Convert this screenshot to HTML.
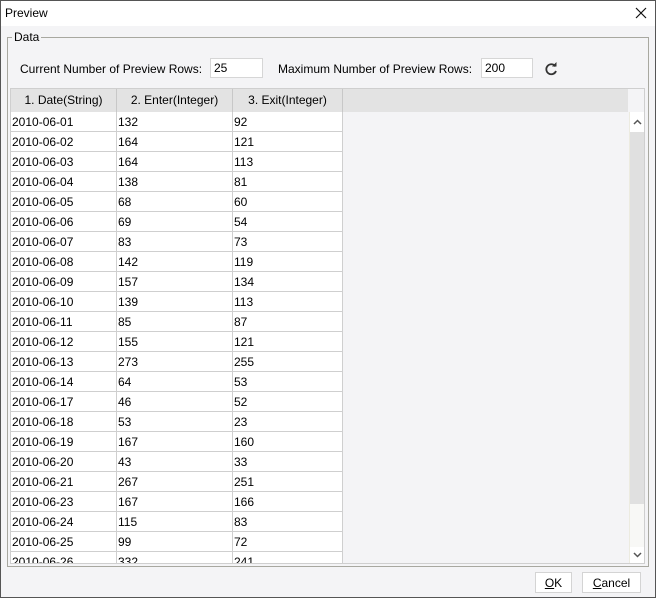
<!DOCTYPE html><html><head><style>
*{margin:0;padding:0;box-sizing:border-box}
body{width:656px;height:598px;overflow:hidden;font-family:"Liberation Sans",sans-serif;font-size:12px;color:#000;background:#f4f4f6;position:relative}
.frame{position:absolute;left:0;top:0;width:656px;height:598px;border:1px solid #555;pointer-events:none;z-index:9}
.title{position:absolute;left:0;top:0;width:656px;height:26px;background:#fff}
.title span{position:absolute;left:5px;top:6px;font-size:12px}
.x{position:absolute;left:635px;top:7px}
.grp{position:absolute;left:7px;top:37px;width:642px;height:530px;border:1px solid #a8a8a0}
.lg{position:absolute;left:12px;top:30px;background:#f4f4f6;padding:0 2px;font-size:12px}
.lbl{position:absolute;top:62px}
.inp{position:absolute;top:58px;height:20px;border:1px solid #d6d6d6;background:#fff;padding:2px 3px}
.tbl{position:absolute;left:10px;top:88px;width:635px;height:476px;border:1px solid #cfcfcf;background:#f4f4f6;overflow:hidden}
.hd{position:absolute;left:0;top:0;width:617px;height:23px;background:#e3e3e3}
.hc{position:absolute;top:0;height:23px;line-height:23px;text-align:center;border-right:1px solid #c8c8c8}
.row{position:absolute;left:0;height:20px;width:332px}
.c{position:absolute;top:0;height:20px;line-height:21px;background:#fff;border-right:1px solid #cfcfcf;border-bottom:1px solid #cfcfcf;padding-left:1px}
.sb{position:absolute;left:618px;top:23px;width:16px;height:452px;background:#f8f8f6;border-left:1px solid #ecebe0}
.btn{position:absolute;top:572px;height:21px;border:1px solid #d4d4d4;background:#fff;text-align:center;line-height:21px}
</style></head><body>
<div class="title"><span>Preview</span>
<svg class="x" width="12" height="12" viewBox="0 0 12 12"><path d="M1 1L11 11M11 1L1 11" stroke="#111" stroke-width="1.2"/></svg></div>
<div class="grp"></div><div class="lg">Data</div>
<div class="lbl" style="left:20px">Current Number of Preview Rows:</div>
<div class="inp" style="left:210px;width:53px">25</div>
<div class="lbl" style="left:278px">Maximum Number of Preview Rows:</div>
<div class="inp" style="left:481px;width:52px">200</div>
<svg style="position:absolute;left:543px;top:61px" width="16" height="16" viewBox="0 0 16 16"><path d="M12.5 5.5A5 5 0 1 0 13 10" fill="none" stroke="#333" stroke-width="1.8"/><path d="M9 5.5L13.5 5.5L13.5 1z" fill="#333"/></svg>
<div class="tbl">
<div class="hd"><div class="hc" style="left:0;width:106px">1. Date(String)</div><div class="hc" style="left:106px;width:116px">2. Enter(Integer)</div><div class="hc" style="left:222px;width:110px">3. Exit(Integer)</div></div>
<div id="rows"></div>
<div class="sb"><div style="position:absolute;left:0;top:0;width:15px;height:20px;background:#fff"><svg width="15" height="20"><path d="M4 12L7.5 8.5L11 12" fill="none" stroke="#555" stroke-width="1.5"/></svg></div>
<div style="position:absolute;left:0;top:20px;width:15px;height:372px;background:#e0e0e0"></div>
<div style="position:absolute;left:0;top:435px;width:15px;height:17px;background:#fff"><svg width="15" height="17"><path d="M4 6L7.5 9.5L11 6" fill="none" stroke="#555" stroke-width="1.5"/></svg></div></div>
</div>
<div class="btn" style="left:535px;width:37px"><u>O</u>K</div>
<div class="btn" style="left:582px;width:59px"><u>C</u>ancel</div>
<div class="frame"></div>
<script>
var d=[["01",132,92],["02",164,121],["03",164,113],["04",138,81],["05",68,60],["06",69,54],["07",83,73],["08",142,119],["09",157,134],["10",139,113],["11",85,87],["12",155,121],["13",273,255],["14",64,53],["17",46,52],["18",53,23],["19",167,160],["20",43,33],["21",267,251],["23",167,166],["24",115,83],["25",99,72],["26",332,241]];
var h="";d.forEach(function(r,i){h+='<div class="row" style="top:'+(23+i*20)+'px"><div class="c" style="left:0;width:106px">2010-06-'+r[0]+'</div><div class="c" style="left:106px;width:116px">'+r[1]+'</div><div class="c" style="left:222px;width:110px">'+r[2]+'</div></div>'});
document.getElementById("rows").innerHTML=h;
</script></body></html>
